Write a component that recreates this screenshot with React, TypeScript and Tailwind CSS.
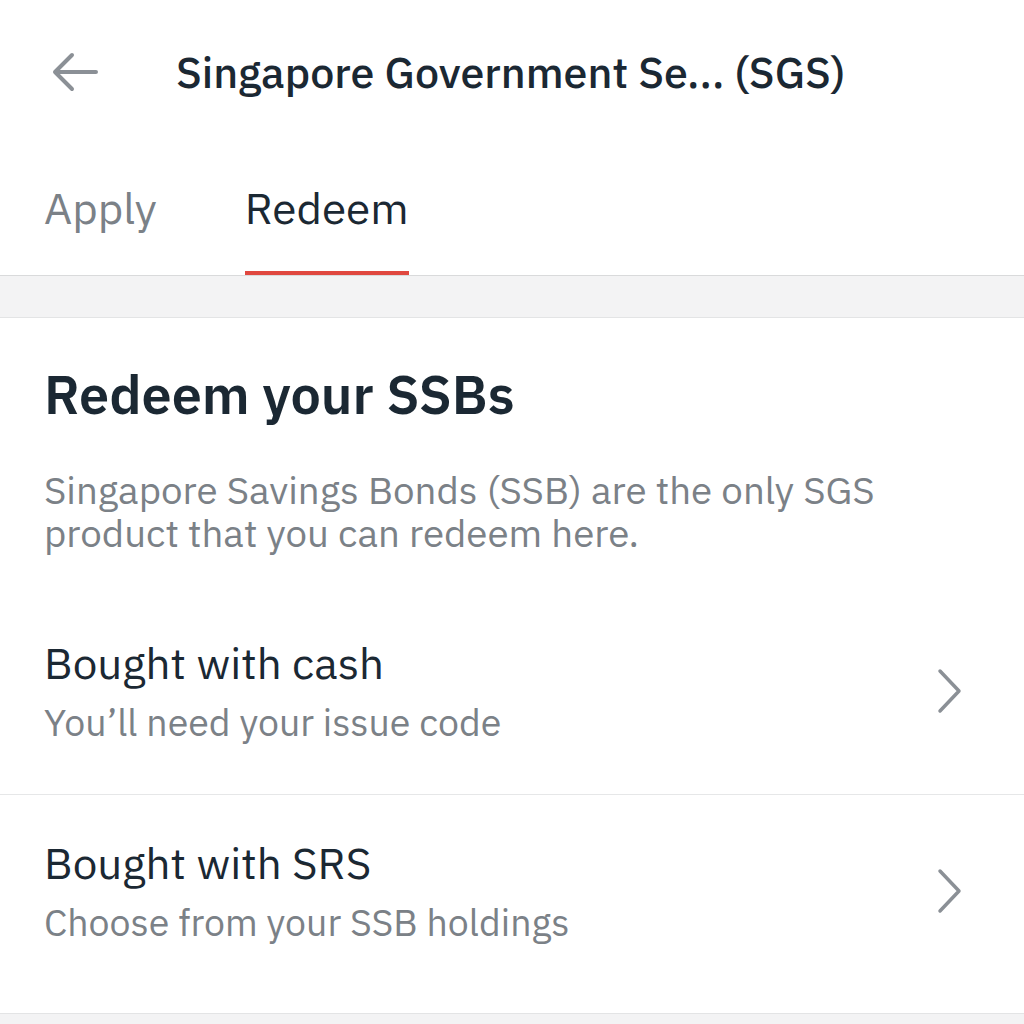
import { ReactNode } from "react";

function Chevron() {
  return (
    <svg width="30" height="48" viewBox="0 0 30 48" fill="none" className="shrink-0">
      <path d="M6 4 L25 24 L6 44" stroke="#8b9096" strokeWidth="3.5" strokeLinecap="round" strokeLinejoin="round" />
    </svg>
  );
}

function OptionRow({ title, sub, last }: { title: string; sub: string; last?: boolean }) {
  return (
    <div className={"flex items-center pl-[44px] pr-[60px] pt-[44px] pb-[51px] " + (last ? "" : "border-b border-[#e6e7e8]")}>
      <div className="flex-1">
        <div className="text-[44px] leading-[48px] text-[#1b2833]">{title}</div>
        <div className="mt-[14px] text-[37.5px] leading-[42px] text-[#7b8187]">{sub}</div>
      </div>
      <Chevron />
    </div>
  );
}

function Tab({ children, active }: { children: ReactNode; active?: boolean }) {
  return (
    <div className="flex flex-col">
      <div className={"pt-[40px] pb-[39px] text-[44px] leading-[48px] " + (active ? "text-[#1b2833]" : "text-[#7b8187]")}>{children}</div>
      <div className={"h-[4px] " + (active ? "bg-[#e0483f]" : "bg-transparent")} />
    </div>
  );
}

export default function App() {
  return (
    <div className="w-[1024px] h-[1024px] bg-[#f3f3f4] overflow-hidden" style={{ fontFamily: "'IBM Plex Sans', Roboto, sans-serif" }}>
      <div className="bg-white">
        <div className="h-[144px] flex items-center">
          <div className="w-[176px] pl-[50px]">
            <svg width="50" height="40" viewBox="0 0 50 40" fill="none">
              <path d="M46 20 H5 M22 3 L5 20 L22 37" stroke="#8b9096" strokeWidth="4" strokeLinecap="round" strokeLinejoin="round" />
            </svg>
          </div>
          <div className="text-[43px] font-medium text-[#1b2833] leading-[48px]">Singapore Government Se... (SGS)</div>
        </div>
        <div className="flex gap-[88px] px-[44px] border-b border-[#d9dadb]">
          <Tab>Apply</Tab>
          <Tab active>Redeem</Tab>
        </div>
      </div>
      <div className="h-[42px] bg-[#f3f3f4] border-b border-[#e3e4e5]" />
      <div className="bg-white border-b border-[#e3e4e5] pb-[19px]">
        <div className="px-[44px] pt-[48px]">
          <div className="text-[54px] leading-[56px] font-semibold text-[#1b2833]">Redeem your SSBs</div>
          <div className="mt-[47px] text-[38.5px] leading-[43px] text-[#7b8187]">
            Singapore Savings Bonds (SSB) are the only SGS
            <br />
            product that you can redeem here.
          </div>
        </div>
        <div className="mt-[40px]">
          <OptionRow title="Bought with cash" sub="You’ll need your issue code" />
          <OptionRow title="Bought with SRS" sub="Choose from your SSB holdings" last />
        </div>
      </div>
    </div>
  );
}
